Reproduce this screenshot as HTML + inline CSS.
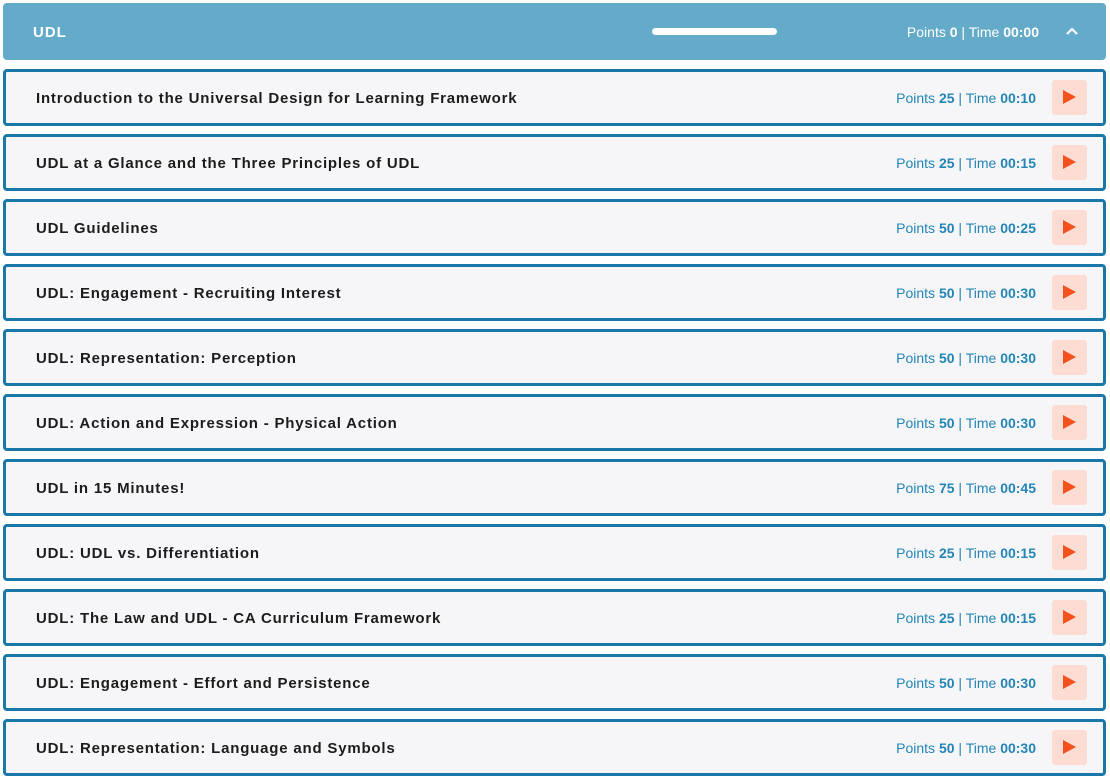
<!DOCTYPE html>
<html><head><style>
body{margin:0;background:#fff;width:1110px;height:781px;overflow:hidden;font-family:"Liberation Sans",sans-serif}
.hdr{position:absolute;left:3px;top:3px;width:1103px;height:57px;background:#63abc9;border-radius:4px;color:#fff}
.hdr .t{position:absolute;left:30px;top:21px;font-weight:bold;font-size:15px;letter-spacing:1px}
.bar{position:absolute;left:649px;top:25px;width:125px;height:7px;background:#fff;border-radius:4px}
.hdr .p{position:absolute;right:67px;top:21px;font-size:14px}
.chev{position:absolute;right:27px;top:23px}
.row{position:absolute;left:3px;width:1097px;height:51px;border:3px solid #1a78a8;border-radius:4px;background:#f6f6f9}
.row .t{position:absolute;left:30px;top:18px;font-weight:bold;font-size:15px;letter-spacing:0.8px;color:#1c1c1c}
.row .p{position:absolute;right:67px;top:18px;font-size:14px;color:#2285b5}
.play{position:absolute;right:16px;top:8px;width:35px;height:35px;background:#fcdcd3;border-radius:3px}
.play:after{content:"";position:absolute;left:11px;top:10px;border-left:13px solid #f4511e;border-top:7.5px solid transparent;border-bottom:7.5px solid transparent}
</style></head><body>
<div class="hdr"><div class="t">UDL</div><div class="bar"></div><div class="p">Points <b>0</b> | Time <b>00:00</b></div>
<svg class="chev" width="14" height="10" viewBox="0 0 14 10"><path d="M2 8 L7 3 L12 8" stroke="#fff" stroke-width="2.2" fill="none"/></svg></div>
<div class="row" style="top:69px"><div class="t">Introduction to the Universal Design for Learning Framework</div><div class="p">Points <b>25</b> | Time <b>00:10</b></div><div class="play"></div></div>
<div class="row" style="top:134px"><div class="t">UDL at a Glance and the Three Principles of UDL</div><div class="p">Points <b>25</b> | Time <b>00:15</b></div><div class="play"></div></div>
<div class="row" style="top:199px"><div class="t">UDL Guidelines</div><div class="p">Points <b>50</b> | Time <b>00:25</b></div><div class="play"></div></div>
<div class="row" style="top:264px"><div class="t">UDL: Engagement - Recruiting Interest</div><div class="p">Points <b>50</b> | Time <b>00:30</b></div><div class="play"></div></div>
<div class="row" style="top:329px"><div class="t">UDL: Representation: Perception</div><div class="p">Points <b>50</b> | Time <b>00:30</b></div><div class="play"></div></div>
<div class="row" style="top:394px"><div class="t">UDL: Action and Expression - Physical Action</div><div class="p">Points <b>50</b> | Time <b>00:30</b></div><div class="play"></div></div>
<div class="row" style="top:459px"><div class="t">UDL in 15 Minutes!</div><div class="p">Points <b>75</b> | Time <b>00:45</b></div><div class="play"></div></div>
<div class="row" style="top:524px"><div class="t">UDL: UDL vs. Differentiation</div><div class="p">Points <b>25</b> | Time <b>00:15</b></div><div class="play"></div></div>
<div class="row" style="top:589px"><div class="t">UDL: The Law and UDL - CA Curriculum Framework</div><div class="p">Points <b>25</b> | Time <b>00:15</b></div><div class="play"></div></div>
<div class="row" style="top:654px"><div class="t">UDL: Engagement - Effort and Persistence</div><div class="p">Points <b>50</b> | Time <b>00:30</b></div><div class="play"></div></div>
<div class="row" style="top:719px"><div class="t">UDL: Representation: Language and Symbols</div><div class="p">Points <b>50</b> | Time <b>00:30</b></div><div class="play"></div></div>
</body></html>
